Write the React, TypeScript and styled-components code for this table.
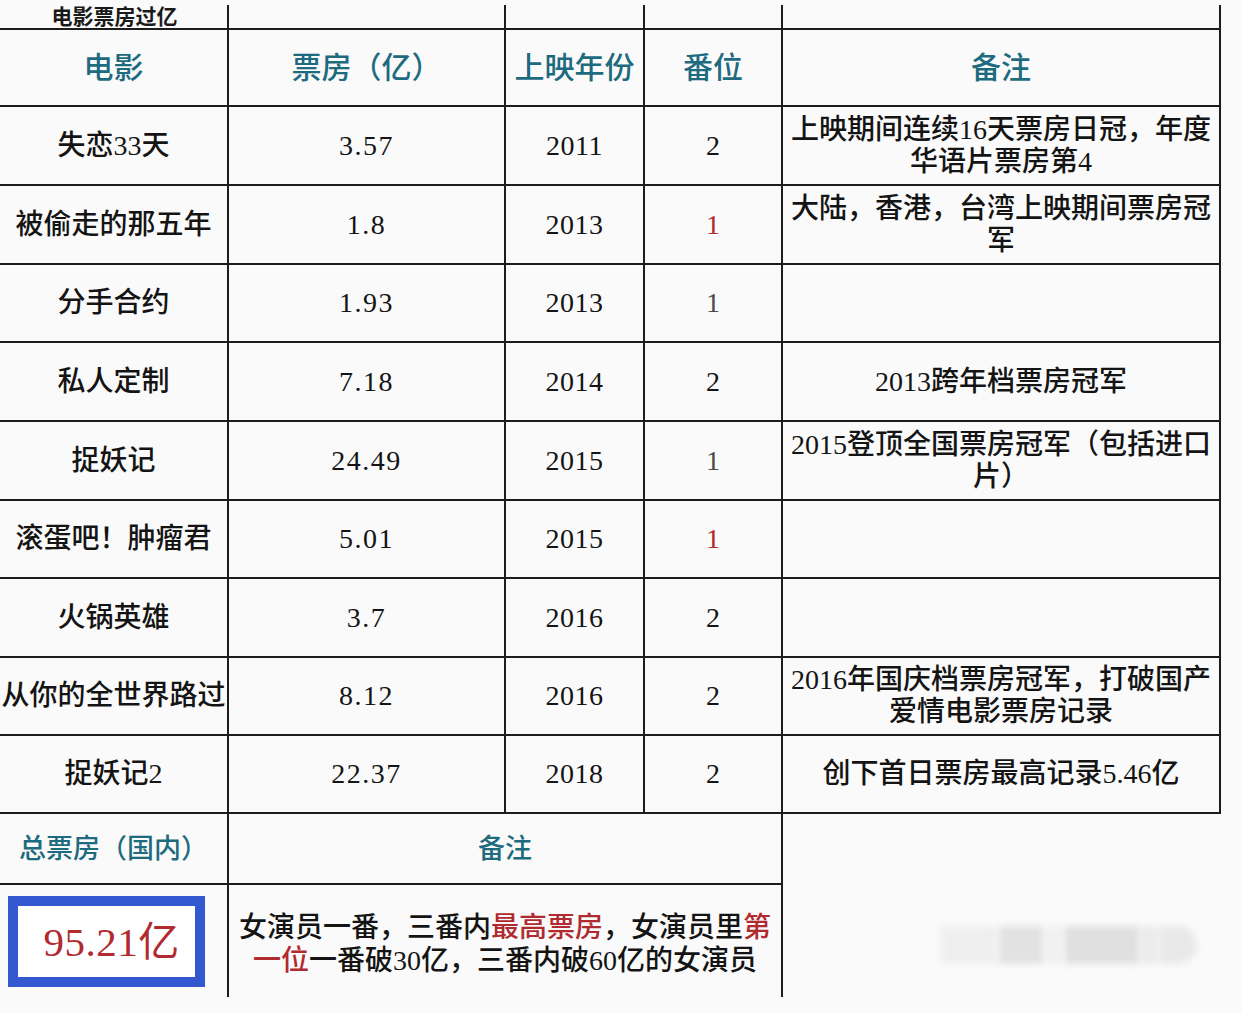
import React from 'react';
import styled, { createGlobalStyle } from 'styled-components';

const LINE = '#1c1c1c';
const TEAL = '#1e6a7f';
const RED = '#b02a30';
const COLS = '229px 277px 139px 138px 438px';

const GlobalStyle = createGlobalStyle`
  html, body { margin: 0; padding: 0; background: #fafafa; }
  body {
    width: 1242px;
    height: 1013px;
    overflow: hidden;
    font-family: "Liberation Serif", "Noto Sans CJK SC", serif;
    color: #141414;
  }
`;

const Sheet = styled.div`
  display: flex;
  flex-direction: column;
  width: 1242px;
`;

const Row = styled.div<{ $h: number; $cols?: string }>`
  display: grid;
  grid-template-columns: ${(p) => p.$cols ?? COLS};
  height: ${(p) => p.$h}px;
`;

const Cell = styled.div<{
  $right?: boolean;
  $bottom?: boolean;
  $size?: number;
  $color?: string;
  $weight?: number;
  $spacing?: number;
  $lh?: number;
  $nowrap?: boolean;
}>`
  box-sizing: border-box;
  display: flex;
  align-items: center;
  justify-content: center;
  text-align: center;
  padding: ${(p) => (p.$nowrap ? '0' : '0 4px')};
  white-space: ${(p) => (p.$nowrap ? 'nowrap' : 'normal')};
  border-right: ${(p) => (p.$right === false ? 'none' : `2px solid ${LINE}`)};
  border-bottom: ${(p) => (p.$bottom === false ? 'none' : `2px solid ${LINE}`)};
  font-size: ${(p) => p.$size ?? 28}px;
  color: ${(p) => p.$color ?? '#141414'};
  font-weight: ${(p) => p.$weight ?? 500};
  letter-spacing: ${(p) => p.$spacing ?? 0}px;
  line-height: ${(p) => p.$lh ?? 32}px;
  overflow: visible;
`;

const TitleCell = styled.div`
  box-sizing: border-box;
  display: flex;
  align-items: center;
  justify-content: center;
  padding-top: 2px;
  border-bottom: 2px solid ${LINE};
  background: linear-gradient(${LINE}, ${LINE}) right bottom / 2px calc(100% - 5px) no-repeat;
  font-family: "Noto Sans CJK SC", sans-serif;
  font-size: 21px;
  font-weight: 700;
  line-height: 26px;
  color: #1a1a1a;
`;

const Red = styled.span`
  color: ${RED};
`;

const BoxCell = styled.div`
  box-sizing: border-box;
  border-right: 2px solid ${LINE};
  padding: 11px 0 0 8px;
`;

const TotalBox = styled.div`
  box-sizing: border-box;
  width: 197px;
  height: 91px;
  border: 10px solid #3458cf;
  background: #ffffff;
  display: flex;
  align-items: center;
  justify-content: center;
  padding-left: 10px;
  font-size: 41px;
  line-height: 46px;
  color: ${RED};
  letter-spacing: 0.5px;
`;

const NoteCell = styled.div`
  box-sizing: border-box;
  border-right: 2px solid ${LINE};
  display: flex;
  flex-direction: column;
  align-items: center;
  justify-content: center;
  padding: 6px 6px 0 6px;
  text-align: center;
  font-size: 28px;
  font-weight: 500;
  color: #141414;
`;

const NoteLine = styled.div`
  height: 33px;
  line-height: 33px;
  white-space: nowrap;
  display: flex;
  align-items: center;
`;

const WatermarkCell = styled.div`
  display: flex;
  align-items: center;
  justify-content: flex-end;
  padding: 8px 24px 0 0;
`;

const Watermark = styled.div`
  display: flex;
  align-items: center;
  gap: 2px;
  filter: blur(3px);
`;

const Blot = styled.div<{ $w: number; $c: string; $round?: boolean }>`
  width: ${(p) => p.$w}px;
  height: 38px;
  background: ${(p) => p.$c};
  border-radius: ${(p) => (p.$round ? '0 19px 19px 0' : '2px')};
`;

type Movie = {
  name: string;
  gross: string;
  year: string;
  rank: string;
  rankTone: 'red' | 'dark' | 'grey';
  note: string;
  h: number;
};

const movies: Movie[] = [
  { name: '失恋33天', gross: '3.57', year: '2011', rank: '2', rankTone: 'dark', note: '上映期间连续16天票房日冠，年度华语片票房第4', h: 79 },
  { name: '被偷走的那五年', gross: '1.8', year: '2013', rank: '1', rankTone: 'red', note: '大陆，香港，台湾上映期间票房冠军', h: 79 },
  { name: '分手合约', gross: '1.93', year: '2013', rank: '1', rankTone: 'grey', note: '', h: 78 },
  { name: '私人定制', gross: '7.18', year: '2014', rank: '2', rankTone: 'dark', note: '2013跨年档票房冠军', h: 79 },
  { name: '捉妖记', gross: '24.49', year: '2015', rank: '1', rankTone: 'grey', note: '2015登顶全国票房冠军（包括进口片）', h: 79 },
  { name: '滚蛋吧！肿瘤君', gross: '5.01', year: '2015', rank: '1', rankTone: 'red', note: '', h: 78 },
  { name: '火锅英雄', gross: '3.7', year: '2016', rank: '2', rankTone: 'dark', note: '', h: 79 },
  { name: '从你的全世界路过', gross: '8.12', year: '2016', rank: '2', rankTone: 'dark', note: '2016年国庆档票房冠军，打破国产爱情电影票房记录', h: 78 },
  { name: '捉妖记2', gross: '22.37', year: '2018', rank: '2', rankTone: 'dark', note: '创下首日票房最高记录5.46亿', h: 78 },
];

const toneColor = { red: RED, dark: '#141414', grey: '#4a4a4a' };

const headers = ['电影', '票房（亿）', '上映年份', '番位', '备注'];

export default function App() {
  return (
    <>
      <GlobalStyle />
      <Sheet>
        <Row $h={30}>
          <TitleCell>电影票房过亿</TitleCell>
          <TitleCell />
          <TitleCell />
          <TitleCell />
          <TitleCell />
        </Row>
        <Row $h={77}>
          {headers.map((h) => (
            <Cell key={h} $size={30} $color={TEAL} $weight={500} $lh={36} $nowrap>
              {h}
            </Cell>
          ))}
        </Row>
        {movies.map((m) => (
          <Row key={m.name} $h={m.h}>
            <Cell $nowrap>{m.name}</Cell>
            <Cell $spacing={1.5}>{m.gross}</Cell>
            <Cell $spacing={0.5}>{m.year}</Cell>
            <Cell $color={toneColor[m.rankTone]}>{m.rank}</Cell>
            <Cell>{m.note}</Cell>
          </Row>
        ))}
        <Row $h={71} $cols="229px 554px 438px">
          <Cell $size={27} $color={TEAL} $lh={32} $nowrap>总票房（国内）</Cell>
          <Cell $size={27} $color={TEAL} $lh={32}>备注</Cell>
          <div />
        </Row>
        <Row $h={112} $cols="229px 554px 438px">
          <BoxCell>
            <TotalBox>95.21亿</TotalBox>
          </BoxCell>
          <NoteCell>
            <NoteLine>
              女演员一番，三番内<Red>最高票房</Red>，女演员里<Red>第</Red>
            </NoteLine>
            <NoteLine>
              <Red>一位</Red>一番破30亿，三番内破60亿的女演员
            </NoteLine>
          </NoteCell>
          <WatermarkCell>
            <Watermark>
              <Blot $w={56} $c="#efefef" />
              <Blot $w={44} $c="#e2e2e2" />
              <Blot $w={18} $c="#f1f1f1" />
              <Blot $w={74} $c="#e0e0e0" />
              <Blot $w={16} $c="#ebebeb" />
              <Blot $w={38} $c="#e9e9e9" $round />
            </Watermark>
          </WatermarkCell>
        </Row>
      </Sheet>
    </>
  );
}
